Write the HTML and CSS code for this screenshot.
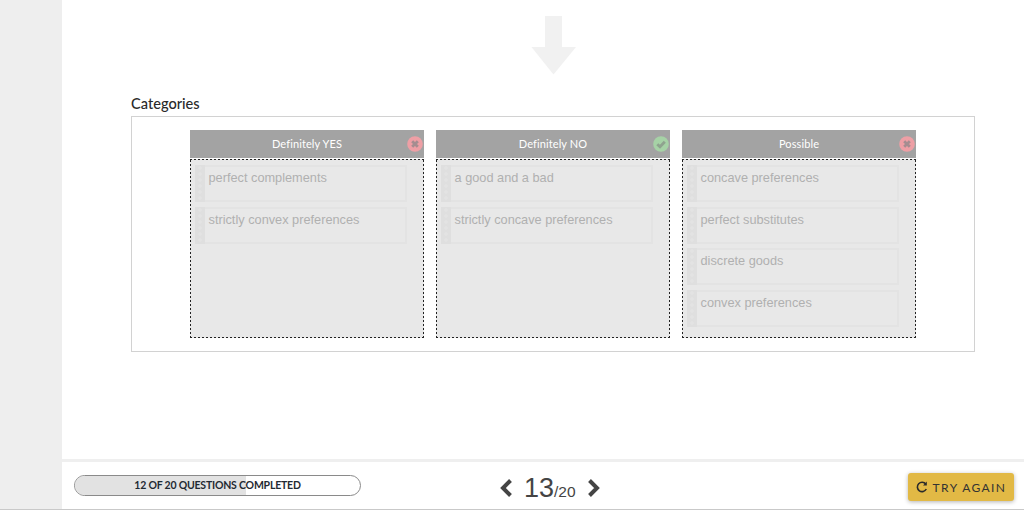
FILE: index.html
```html
<!DOCTYPE html>
<html lang="en">
<head>
<meta charset="utf-8">
<title>Categories</title>
<link rel="stylesheet" href="styles.css">
</head>
<body>
<div class="page">
  <aside class="sidebar"></aside>
  <main class="main">
    <div class="content">
      <div class="arrow-row">
        <svg class="arrow" width="46" height="59" viewBox="0 0 46 59"><path d="M14 0H31V31H45L22.500 58.500L0.500 31H14Z" fill="#f1f1f1"/></svg>
      </div>
      <h2 class="title">Categories</h2>
      <section class="panel">
        <div class="column">
          <div class="col-head">Definitely YES
            <svg class="status" width="18" height="18" viewBox="0 0 18 18"><circle cx="9" cy="9" r="7.800" fill="#ee9fa5"/><path d="M6.200 6.200L11.800 11.800M11.800 6.200L6.200 11.800" stroke="#a58d90" stroke-width="2.800"/></svg>
          </div>
          <div class="drop">
            <div class="item"><span class="grip"></span><span class="label">perfect complements</span></div>
            <div class="item"><span class="grip"></span><span class="label">strictly convex preferences</span></div>
          </div>
        </div>
        <div class="column">
          <div class="col-head">Definitely NO
            <svg class="status" width="18" height="18" viewBox="0 0 18 18"><circle cx="9" cy="9" r="7.800" fill="#a6d2a6"/><path d="M5.300 9.200L8 11.800L12.800 6.700" fill="none" stroke="#8fa38f" stroke-width="2.800"/></svg>
          </div>
          <div class="drop">
            <div class="item"><span class="grip"></span><span class="label">a good and a bad</span></div>
            <div class="item"><span class="grip"></span><span class="label">strictly concave preferences</span></div>
          </div>
        </div>
        <div class="column">
          <div class="col-head">Possible
            <svg class="status" width="18" height="18" viewBox="0 0 18 18"><circle cx="9" cy="9" r="7.800" fill="#ee9fa5"/><path d="M6.200 6.200L11.800 11.800M11.800 6.200L6.200 11.800" stroke="#a58d90" stroke-width="2.800"/></svg>
          </div>
          <div class="drop">
            <div class="item"><span class="grip"></span><span class="label">concave preferences</span></div>
            <div class="item"><span class="grip"></span><span class="label">perfect substitutes</span></div>
            <div class="item"><span class="grip"></span><span class="label">discrete goods</span></div>
            <div class="item"><span class="grip"></span><span class="label">convex preferences</span></div>
          </div>
        </div>
      </section>
    </div>
    <footer class="footer">
      <div class="progress">
        <div class="progress-fill" style="width:60%"></div>
        <span class="progress-text">12 OF 20 QUESTIONS COMPLETED</span>
      </div>
      <nav class="pager">
        <svg width="14" height="20" viewBox="0 0 14 20"><path d="M11.500 2.500L4 10L11.500 17.500" fill="none" stroke="#444" stroke-width="4"/></svg>
        <span class="count"><span class="current">13</span><span class="total">/20</span></span>
        <svg width="14" height="20" viewBox="0 0 14 20"><path d="M2.500 2.500L10 10L2.500 17.500" fill="none" stroke="#444" stroke-width="4"/></svg>
      </nav>
      <button class="retry" type="button">
        <svg width="12" height="12" viewBox="0 0 12 12"><path d="M9.800 3.100A4.700 4.700 0 1 0 10.300 8" fill="none" stroke="#2b2b2b" stroke-width="1.600"/><path d="M10.800 0.600V4.400H7Z" fill="#2b2b2b"/></svg>
        <span>TRY AGAIN</span>
      </button>
    </footer>
  </main>
</div>
</body>
</html>
```
FILE: styles.css
```css
* { box-sizing: border-box; }
html, body { margin: 0; height: 100%; }
body { background: #fff; font-family: "Lato", "Liberation Sans", sans-serif; overflow: hidden; }
.page { display: flex; height: 510px; border-bottom: 1px solid #c9c9c9; }
.sidebar { width: 62px; flex: none; background: #eeeeee; }
.main { flex: 1; display: flex; flex-direction: column; min-width: 0; }
.content { flex: 1; padding: 16px 49px 0 69px; }
.arrow-row { display: flex; justify-content: center; padding-left: 2px; height: 59px; }
.arrow { display: block; }
.title { margin: 20px 0 3px; font-size: 14.600px; line-height: 18px; font-weight: 500; color: #2a2a2a; }
.panel { display: flex; gap: 12px; height: 236px; padding: 13px 0 0 58px; border: 1px solid #d2d2d2; }
.column { width: 234px; }
.col-head { position: relative; height: 28px; line-height: 28px; background: #a3a3a3; color: #fff; font-size: 11px; letter-spacing: 0.1px; text-align: center; }
.status { position: absolute; top: 5px; right: 0; }
.drop {
  height: 179px;
  margin-top: 1px;
  padding: 6px 17px 0 5px;
  background-color: #e8e8e8;
  background-image:
    repeating-linear-gradient(90deg, #222 0 2px, transparent 2px 4px),
    repeating-linear-gradient(90deg, #222 0 2px, transparent 2px 4px),
    repeating-linear-gradient(0deg, #222 0 2px, transparent 2px 4px),
    repeating-linear-gradient(0deg, #222 0 2px, transparent 2px 4px);
  background-size: 100% 1px, 100% 1px, 1px 100%, 1px 100%;
  background-position: top, bottom, left, right;
  background-repeat: no-repeat;
}
.item { display: flex; height: 37px; margin-bottom: 4.670px; border: 2px solid #e3e3e3; background: #e8e8e8; }
.grip {
  width: 10px;
  flex: none;
  margin: -2px 0 -2px -2px;
  background-color: #dfdfdf;
  background-image: radial-gradient(circle, #e3e3e3 1.500px, transparent 2px);
  background-size: 10px 6px;
  background-position: center top;
}
.label { padding: 3px 0 0 3.500px; font-family: "Liberation Sans", Arial, sans-serif; font-size: 12.750px; line-height: 15px; color: #b0b0b0; }
.footer { flex: none; display: flex; align-items: center; height: 50px; padding: 0 10px 0 12px; border-top: 3px solid #efefef; }
.progress { position: relative; width: 287px; height: 21px; border: 1px solid #8a8a8a; border-radius: 11px; overflow: hidden; text-align: center; background: #fff; }
.progress-fill { position: absolute; left: 0; top: 0; bottom: 0; background: #e2e2e2; }
.progress-text { position: relative; display: block; font-size: 10.500px; line-height: 19px; font-weight: 700; color: #1f2a33; letter-spacing: -0.2px; }
.pager { display: flex; align-items: center; margin: 4px 0 0 138px; gap: 11px; color: #444; }
.count { display: flex; align-items: baseline; font-family: "Liberation Sans", Arial, sans-serif; }
.current { font-size: 27px; line-height: 30px; }
.total { font-size: 15.500px; }
.retry { display: flex; align-items: center; justify-content: center; gap: 5px; width: 106px; height: 28px; margin: 3px 0 0 auto; padding: 0; background: #e2b945; border: 0; border-radius: 3px; box-shadow: 0 1px 4px rgba(0,0,0,.3); font-family: "Lato", sans-serif; font-size: 12px; letter-spacing: 1.400px; color: #333; }
```
